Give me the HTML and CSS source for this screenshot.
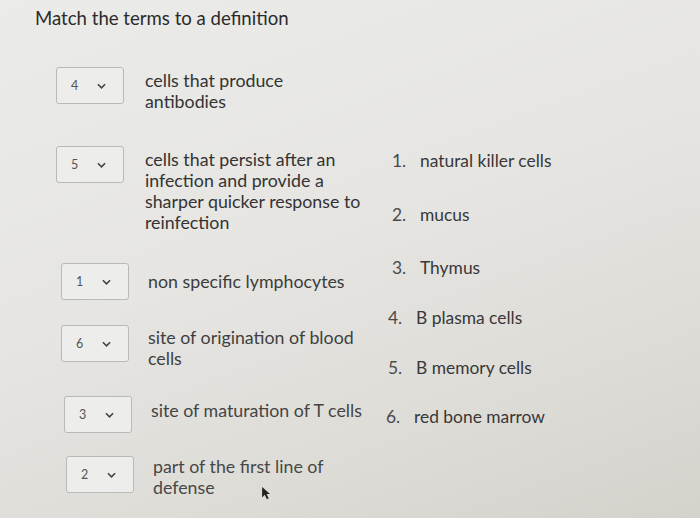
FILE: index.html
```html
<!DOCTYPE html>
<html>
<head>
<meta charset="utf-8">
<link rel="stylesheet" href="styles.css">
</head>
<body>
<div class="page">
  <h1 class="title">Match the terms to a definition</h1>
  <div class="quiz">
    <div class="defs">
      <div class="row r1">
        <div class="select"><span class="val">4</span><svg class="chev" viewBox="0 0 10 6"><path d="M1 1 L5 5 L9 1" /></svg></div>
        <div class="def">cells that produce<br>antibodies</div>
      </div>
      <div class="row r2">
        <div class="select"><span class="val">5</span><svg class="chev" viewBox="0 0 10 6"><path d="M1 1 L5 5 L9 1" /></svg></div>
        <div class="def">cells that persist after an<br>infection and provide a<br>sharper quicker response to<br>reinfection</div>
      </div>
      <div class="row r3">
        <div class="select"><span class="val">1</span><svg class="chev" viewBox="0 0 10 6"><path d="M1 1 L5 5 L9 1" /></svg></div>
        <div class="def">non specific lymphocytes</div>
      </div>
      <div class="row r4">
        <div class="select"><span class="val">6</span><svg class="chev" viewBox="0 0 10 6"><path d="M1 1 L5 5 L9 1" /></svg></div>
        <div class="def">site of origination of blood<br>cells</div>
      </div>
      <div class="row r5">
        <div class="select"><span class="val">3</span><svg class="chev" viewBox="0 0 10 6"><path d="M1 1 L5 5 L9 1" /></svg></div>
        <div class="def">site of maturation of T cells</div>
      </div>
      <div class="row r6">
        <div class="select"><span class="val">2</span><svg class="chev" viewBox="0 0 10 6"><path d="M1 1 L5 5 L9 1" /></svg></div>
        <div class="def">part of the first line of<br>defense</div>
      </div>
    </div>
    <ol class="terms">
      <li><span class="num">1.</span>natural killer cells</li>
      <li><span class="num">2.</span>mucus</li>
      <li><span class="num">3.</span>Thymus</li>
      <li><span class="num">4.</span>B plasma cells</li>
      <li><span class="num">5.</span>B memory cells</li>
      <li><span class="num">6.</span>red bone marrow</li>
    </ol>
  </div>
  <svg class="cursor" viewBox="0 0 12 16"><path d="M1 1 L1 13 L4 10 L6.5 15 L8.5 14 L6 9 L10 9 Z" /></svg>
</div>
</body>
</html>
```

FILE: styles.css
```css
html, body {
  margin: 0;
  padding: 0;
}
body {
  width: 700px;
  height: 518px;
  overflow: hidden;
  font-family: Lato, "Open Sans", sans-serif;
  color: #3b3b3b;
  background: linear-gradient(160deg, #ebebe9 0%, #e6e5e2 45%, #dedcd7 75%, #d5d2cc 100%);
}
.page {
  position: relative;
  height: 518px;
}
.title {
  margin: 0;
  padding: 6px 0 0 35px;
  font-size: 18.6px;
  font-weight: 400;
  line-height: 25px;
  color: #2a2a2a;
}
.quiz {
  display: flex;
  padding-left: 56px;
  margin-top: 36px;
}
.defs {
  width: 330px;
  display: flex;
  flex-direction: column;
  white-space: nowrap;
}
.row {
  display: flex;
  align-items: flex-start;
}
.r2 { margin-top: 34px; }
.r3 { margin-top: 30px; margin-left: 5px; }
.r4 { margin-top: 25px; margin-left: 5px; }
.r5 { margin-top: 27px; margin-left: 8px; }
.r6 { margin-top: 23px; margin-left: 10px; }
.select {
  width: 68px;
  height: 37px;
  box-sizing: border-box;
  border: 1px solid #b9b9b7;
  border-radius: 3px;
  background: #ededeb;
  display: flex;
  align-items: center;
  padding-left: 14px;
  flex-shrink: 0;
}
.val {
  font-size: 12.5px;
  color: #555;
  width: 26px;
}
.chev {
  width: 9px;
  height: 6px;
  fill: none;
  stroke: #444;
  stroke-width: 1.8;
}
.def {
  margin-left: 21px;
  margin-top: 3px;
  font-size: 17.8px;
  line-height: 21px;
  color: #333;
}
.r3 .def { margin-left: 19px; margin-top: 8px; color: #3c3c3c; }
.r4 .def { margin-left: 19px; margin-top: 2px; color: #404040; }
.r5 .def { margin-left: 19px; margin-top: 4px; color: #444; }
.r6 .def { margin-left: 19px; margin-top: 0; color: #474747; }
.terms {
  list-style: none;
  margin: 84px 0 0 6px;
  padding: 0;
  font-size: 17.4px;
  color: #383838;
  white-space: nowrap;
}
.terms li {
  height: 50px;
  line-height: 20px;
  display: flex;
}
.terms li:nth-child(1) { height: 54px; }
.terms li:nth-child(2) { height: 53px; }
.terms li:nth-child(5) { height: 49px; }
.num {
  width: 28px;
  color: #4a4a4a;
}
.terms li:nth-child(4), .terms li:nth-child(5) { margin-left: -4px; }
.terms li:nth-child(6) { margin-left: -6px; }
.cursor {
  position: absolute;
  left: 261px;
  top: 486px;
  width: 11px;
  height: 14px;
  fill: #222;
}
```
